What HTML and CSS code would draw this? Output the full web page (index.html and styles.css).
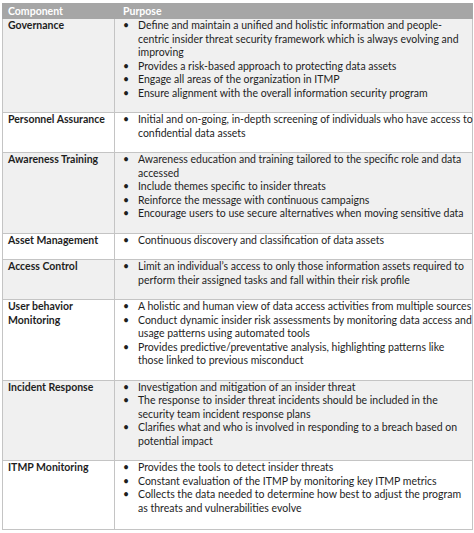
FILE: index.html
```html
<!DOCTYPE html>
<html>
<head>
<meta charset="utf-8">
<link rel="stylesheet" href="styles.css">
</head>
<body>
<table class="itmp">
  <colgroup><col class="w1"><col class="w2"></colgroup>
  <thead>
    <tr><th class="c1">Component</th><th class="c2">Purpose</th></tr>
  </thead>
  <tbody>
    <tr class="alt">
      <td class="c1">Governance</td>
      <td class="c2"><ul>
        <li>Define and maintain a unified and holistic information and people-<br>centric insider threat security framework which is always evolving and<br>improving</li>
        <li>Provides a risk-based approach to protecting data assets</li>
        <li>Engage all areas of the organization in ITMP</li>
        <li>Ensure alignment with the overall information security program</li>
      </ul></td>
    </tr>
    <tr>
      <td class="c1">Personnel Assurance</td>
      <td class="c2"><ul>
        <li>Initial and on-going, in-depth screening of individuals who have access to<br>confidential data assets</li>
      </ul></td>
    </tr>
    <tr class="alt">
      <td class="c1">Awareness Training</td>
      <td class="c2"><ul>
        <li>Awareness education and training tailored to the specific role and data<br>accessed</li>
        <li>Include themes specific to insider threats</li>
        <li>Reinforce the message with continuous campaigns</li>
        <li>Encourage users to use secure alternatives when moving sensitive data</li>
      </ul></td>
    </tr>
    <tr>
      <td class="c1">Asset Management</td>
      <td class="c2"><ul>
        <li>Continuous discovery and classification of data assets</li>
      </ul></td>
    </tr>
    <tr class="alt">
      <td class="c1">Access Control</td>
      <td class="c2"><ul>
        <li>Limit an individual’s access to only those information assets required to<br>perform their assigned tasks and fall within their risk profile</li>
      </ul></td>
    </tr>
    <tr>
      <td class="c1">User behavior<br>Monitoring</td>
      <td class="c2"><ul>
        <li>A holistic and human view of data access activities from multiple sources</li>
        <li>Conduct dynamic insider risk assessments by monitoring data access and<br>usage patterns using automated tools</li>
        <li>Provides predictive/preventative analysis, highlighting patterns like<br>those linked to previous misconduct</li>
      </ul></td>
    </tr>
    <tr class="alt">
      <td class="c1">Incident Response</td>
      <td class="c2"><ul>
        <li>Investigation and mitigation of an insider threat</li>
        <li>The response to insider threat incidents should be included in the<br>security team incident response plans</li>
        <li>Clarifies what and who is involved in responding to a breach based on<br>potential impact</li>
      </ul></td>
    </tr>
    <tr class="last">
      <td class="c1">ITMP Monitoring</td>
      <td class="c2"><ul>
        <li>Provides the tools to detect insider threats</li>
        <li>Constant evaluation of the ITMP by monitoring key ITMP metrics</li>
        <li>Collects the data needed to determine how best to adjust the program<br>as threats and vulnerabilities evolve</li>
      </ul></td>
    </tr>
  </tbody>
</table>
</body>
</html>
```
FILE: styles.css
```css
html, body {
  margin: 0;
  padding: 0;
  background: #ffffff;
}
body {
  padding: 3px 2px 0 2px;
  font-family: Lato, "Open Sans", sans-serif;
  font-size: 10.5px;
  line-height: 13.5px;
  color: #1e1e1e;
}
.itmp {
  border-collapse: collapse;
  width: 470px;
  table-layout: fixed;
}
.itmp col.w1 { width: 112px; }
.itmp col.w2 { width: 358px; }
.itmp th {
  background: #a6a6a6;
  color: #ffffff;
  font-weight: 700;
  font-size: 10.5px;
  text-align: left;
  height: 14px;
  padding: 0 0 0 5px;
  border: 1px solid #a6a6a6;
  line-height: 13px;
}
.itmp th.c2 {
  padding-left: 8px;
  border-left: 1px dotted #d6d6d6;
}
.itmp td {
  vertical-align: top;
  border: 1px solid #c4c4c4;
  padding: 0 0 12px 0;
  white-space: nowrap;
}
.itmp td.c1 {
  font-weight: 700;
  font-size: 10.5px;
  padding-left: 5px;
}
.itmp tr.last td { padding-bottom: 14px; }
.itmp tr.alt td { background: #f0f0f0; }
.itmp ul {
  list-style: none;
  margin: 0;
  padding: 0 0 0 7px;
}
.itmp li {
  position: relative;
  padding-left: 16px;
}
.itmp li::before {
  content: "•";
  position: absolute;
  left: 1px;
  top: 0;
}
```
